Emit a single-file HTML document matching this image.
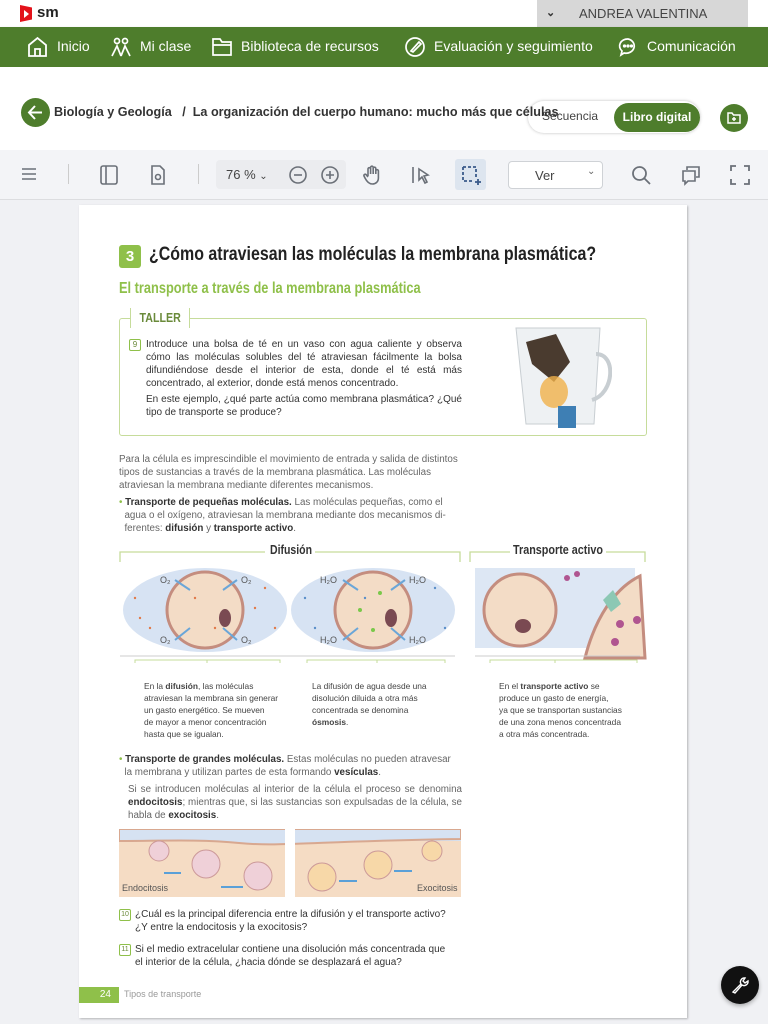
<!DOCTYPE html>
<html><head><meta charset="utf-8"><style>
*{box-sizing:border-box;margin:0;padding:0}
body{width:768px;height:1024px;overflow:hidden;background:#f0f1f4;font-family:"Liberation Sans",sans-serif;position:relative;color:#333}
.a{position:absolute}
.nav span{position:absolute;top:11px;color:#fff;font-size:14px}
.nav svg{position:absolute;top:9px}
.pt{font-size:9.8px;line-height:13px;color:#666;position:absolute}
.pt b{color:#333}
.cap{font-size:8.4px;line-height:12px;color:#444;position:absolute}
.tb svg{position:absolute;top:164px}
</style></head><body>
<!-- top bar -->
<div class="a" style="left:0;top:0;width:768px;height:27px;background:#fff"></div>
<div class="a" style="left:20px;top:5px;width:12px;height:17px;background:#e3131b;clip-path:polygon(0 0,100% 15%,100% 85%,0 100%)"></div>
<div class="a" style="left:24px;top:10px;width:0;height:0;border-left:5px solid #fff;border-top:4px solid transparent;border-bottom:4px solid transparent"></div>
<div class="a" style="left:37px;top:4px;font-size:15px;font-weight:bold;color:#222">sm</div>
<div class="a" style="left:537px;top:0;width:211px;height:27px;background:#d7d7d7"></div>
<div class="a" style="left:546px;top:6px;font-size:11px;color:#333;font-weight:bold">&#8964;</div>
<div class="a" style="left:579px;top:6px;font-size:13px;color:#444">ANDREA VALENTINA</div>
<!-- nav -->
<div class="a nav" style="left:0;top:27px;width:768px;height:40px;background:#4e7d2c;box-shadow:0 2px 4px rgba(0,0,0,.2)">
<svg style="left:27px" width="21" height="22" viewBox="0 0 21 22" fill="none" stroke="#fff" stroke-width="1.8"><path d="M2 9L10.5 2 19 9V20H2Z M8 20V13H13V20"/></svg><span style="left:57px">Inicio</span>
<svg style="left:110px" width="22" height="22" viewBox="0 0 22 22" fill="none" stroke="#fff" stroke-width="1.7"><circle cx="7" cy="5" r="2.5"/><circle cx="15" cy="5" r="2.5"/><path d="M2 20L7 10 11 20M11 20L15 10 20 20"/></svg><span style="left:140px">Mi clase</span>
<svg style="left:211px" width="22" height="22" viewBox="0 0 22 22" fill="none" stroke="#fff" stroke-width="1.7"><path d="M2 3H9L11 6H20V19H2Z M2 9H20"/></svg><span style="left:241px">Biblioteca de recursos</span>
<svg style="left:404px" width="22" height="22" viewBox="0 0 22 22" fill="none" stroke="#fff" stroke-width="1.7"><circle cx="11" cy="11" r="9"/><path d="M7 15L15 6 17 8 9 16Z"/></svg><span style="left:434px">Evaluación y seguimiento</span>
<svg style="left:617px" width="22" height="22" viewBox="0 0 22 22" fill="none" stroke="#fff" stroke-width="1.7"><path d="M11 3A8 7 0 1 1 7 17L4 19 5 15A8 7 0 0 1 11 3Z"/><circle cx="7.5" cy="10" r=".8" fill="#fff"/><circle cx="11" cy="10" r=".8" fill="#fff"/><circle cx="14.5" cy="10" r=".8" fill="#fff"/></svg><span style="left:647px">Comunicación</span>
</div>
<!-- breadcrumb -->
<div class="a" style="left:0;top:67px;width:768px;height:83px;background:#fff"></div>
<div class="a" style="left:21px;top:98px;width:29px;height:29px;border-radius:50%;background:#4e7d2c"></div>
<svg class="a" style="left:26px;top:103px" width="19" height="19" viewBox="0 0 19 19" fill="none" stroke="#fff" stroke-width="2"><path d="M16 9.5H3M9 3L3 9.5 9 16"/></svg>
<div class="a" style="left:528px;top:101px;width:172px;height:32px;border-radius:16px;background:#fff;box-shadow:0 0 3px rgba(0,0,0,.25)"></div>
<div class="a" style="left:542px;top:109px;font-size:12px;color:#444">Secuencia</div>
<div class="a" style="left:54px;top:104px;font-size:13px;font-weight:bold;color:#333;white-space:nowrap;transform:scaleX(.97);transform-origin:left">Biología y Geología&nbsp;&nbsp; /&nbsp; La organización del cuerpo humano: mucho más que células</div>
<div class="a" style="left:614px;top:103px;width:86px;height:29px;border-radius:15px;background:#4e7d2c;color:#fff;font-size:12px;font-weight:bold;text-align:center;line-height:29px">Libro digital</div>
<div class="a" style="left:720px;top:104px;width:28px;height:28px;border-radius:50%;background:#4e7d2c"></div>
<svg class="a" style="left:726px;top:110px" width="16" height="16" viewBox="0 0 16 16" fill="none" stroke="#fff" stroke-width="1.5"><path d="M2 3H6L7.5 5H14V13H2Z M8 7V11M6 9H10"/></svg>
<!-- toolbar -->
<div class="a" style="left:0;top:150px;width:768px;height:50px;background:#f3f4f7;border-bottom:1px solid #dcdde0"></div>
<div class="tb">
<svg class="a" style="left:20px" width="18" height="20" viewBox="0 0 18 20" stroke="#6b7078" stroke-width="1.6"><path d="M2 5H16M2 10H16M2 15H16"/></svg>
<div class="a" style="left:68px;top:164px;width:1px;height:20px;background:#ccc"></div>
<svg class="a" style="left:99px" width="20" height="22" viewBox="0 0 20 22" fill="none" stroke="#6b7078" stroke-width="1.6"><rect x="2" y="2" width="16" height="18" rx="2"/><path d="M7 2V20"/></svg>
<svg class="a" style="left:149px" width="18" height="22" viewBox="0 0 18 22" fill="none" stroke="#6b7078" stroke-width="1.6"><path d="M3 2H11L15 6V20H3Z"/><circle cx="9" cy="13" r="2.5"/></svg>
<div class="a" style="left:198px;top:164px;width:1px;height:20px;background:#ccc"></div>
<div class="a" style="left:216px;top:160px;width:130px;height:29px;background:#ebecef;border-radius:4px"></div>
<div class="a" style="left:226px;top:167px;font-size:13px;color:#444">76 % <span style="font-size:10px">&#8964;</span></div>
<svg class="a" style="left:287px" width="22" height="22" viewBox="0 0 22 22" fill="none" stroke="#6b7078" stroke-width="1.6"><circle cx="11" cy="11" r="8"/><path d="M7 11H15"/></svg>
<svg class="a" style="left:319px" width="22" height="22" viewBox="0 0 22 22" fill="none" stroke="#6b7078" stroke-width="1.6"><circle cx="11" cy="11" r="8"/><path d="M7 11H15M11 7V15"/></svg>
<svg class="a" style="left:361px" width="22" height="22" viewBox="0 0 22 22" fill="none" stroke="#6b7078" stroke-width="1.6"><path d="M7 12V5a1.3 1.3 0 0 1 2.6 0V10V3.5a1.3 1.3 0 0 1 2.6 0V10V4.5a1.3 1.3 0 0 1 2.6 0V10V7a1.3 1.3 0 0 1 2.6 0V14c0 4-3 6-6 6S6 18 4 14L3 12a1.3 1.3 0 0 1 2.2-1.3L7 13"/></svg>
<svg class="a" style="left:410px" width="22" height="22" viewBox="0 0 22 22" fill="none" stroke="#6b7078" stroke-width="1.6"><path d="M3 3V19M9 5L18 11 14 12 17 18 15 19 12 13 9 16Z"/></svg>
<div class="a" style="left:455px;top:159px;width:31px;height:31px;background:#dde5ef;border-radius:3px"></div>
<svg class="a" style="left:460px" width="22" height="22" viewBox="0 0 22 22" fill="none" stroke="#3a5a8a" stroke-width="1.8" stroke-dasharray="3 2"><path d="M3 3H16V14M3 3V17H14"/><path d="M18 15V21M15 18H21" stroke-dasharray="none"/></svg>
<div class="a" style="left:508px;top:161px;width:95px;height:28px;background:#fff;border:1px solid #cfd2d6;border-radius:4px"></div>
<div class="a" style="left:535px;top:168px;font-size:13px;color:#444">Ver</div>
<div class="a" style="left:587px;top:166px;font-size:10px;color:#666">&#8964;</div>
<svg class="a" style="left:630px" width="22" height="22" viewBox="0 0 22 22" fill="none" stroke="#6b7078" stroke-width="1.8"><circle cx="9.5" cy="9.5" r="6.5"/><path d="M14 14L20 20"/></svg>
<svg class="a" style="left:680px" width="22" height="22" viewBox="0 0 22 22" fill="none" stroke="#6b7078" stroke-width="1.6"><path d="M7 6V3H19V13H16M3 7H15V17H8L5 20V17H3Z"/></svg>
<svg class="a" style="left:729px" width="22" height="22" viewBox="0 0 22 22" fill="none" stroke="#6b7078" stroke-width="1.8"><path d="M2 7V2H7M15 2H20V7M20 15V20H15M7 20H2V15"/></svg>
</div>
<!-- page -->
<div class="a" style="left:79px;top:205px;width:608px;height:813px;background:#fff;box-shadow:1px 1px 2px rgba(0,0,0,.25)"></div>
<div class="a" style="left:119px;top:245px;width:22px;height:23px;background:#8fc04a;border-radius:3px;color:#fff;font-weight:bold;font-size:15px;text-align:center;line-height:23px">3</div>
<div class="a" style="left:149px;top:244px;font-size:19px;font-weight:bold;color:#222;white-space:nowrap;transform:scaleX(.84);transform-origin:left">¿Cómo atraviesan las moléculas la membrana plasmática?</div>
<div class="a" style="left:119px;top:280px;font-size:16px;font-weight:bold;color:#8fc04a;white-space:nowrap;transform:scaleX(.8);transform-origin:left">El transporte a través de la membrana plasmática</div>
<div class="a" style="left:119px;top:318px;width:528px;height:118px;border:1.5px solid #c6dc9b;border-radius:3px"></div>
<div class="a" style="left:130px;top:308px;width:60px;height:20px;background:#fff;border-left:1.5px solid #c6dc9b;border-right:1.5px solid #c6dc9b;font-size:13px;font-weight:bold;color:#6a8a3a;text-align:center;line-height:20px"><span style="display:inline-block;transform:scaleX(.82)">TALLER</span></div>
<div class="a" style="left:129px;top:339px;width:12px;height:12px;border:1.2px solid #8fc04a;border-radius:2px;font-size:8px;text-align:center;line-height:10px;color:#6a8a3a">9</div>
<div class="pt" style="left:146px;top:338px;width:316px;color:#333;font-size:10px;line-height:13px;text-align:justify">Introduce una bolsa de té en un vaso con agua caliente y observa cómo las moléculas solubles del té atraviesan fácilmente la bolsa difundiéndose desde el interior de esta, donde el té está más concentrado, al exterior, donde está menos concentrado.<div style="margin-top:3px">En este ejemplo, ¿qué parte actúa como membrana plasmática? ¿Qué tipo de transporte se produce?</div></div>
<svg class="a" style="left:512px;top:324px" width="100" height="108" viewBox="0 0 100 108">
<path d="M4 4H88L82 100H14Z" fill="#eef1f3" stroke="#c8ced2"/>
<path d="M84 30C105 30 102 70 80 76" fill="none" stroke="#c8ced2" stroke-width="4"/>
<path d="M14 18L44 10 58 38 42 58 20 40Z" fill="#4a3b2f"/>
<ellipse cx="42" cy="68" rx="14" ry="16" fill="#f0b24a" opacity=".8"/>
<rect x="46" y="82" width="18" height="22" fill="#3e7fb4"/>
</svg>
<div class="pt" style="left:119px;top:453px;width:343px">Para la célula es imprescindible el movimiento de entrada y salida de distintos tipos de sustancias a través de la membrana plasmática. Las moléculas atraviesan la membrana mediante diferentes mecanismos.</div>
<div class="pt" style="left:119px;top:496px;width:345px;white-space:nowrap"><span style="color:#8fc04a">•</span> <b>Transporte de pequeñas moléculas.</b> Las moléculas pequeñas, como el<br>&nbsp;&nbsp;agua o el oxígeno, atraviesan la membrana mediante dos mecanismos di-<br>&nbsp;&nbsp;ferentes: <b>difusión</b> y <b>transporte activo</b>.</div>
<!-- diagram -->
<svg class="a" style="left:115px;top:538px" width="540" height="125" viewBox="0 0 540 125">
<path d="M5 24V14H345V24M355 24V14H530V24" fill="none" stroke="#c6dc9b" stroke-width="1.3"/>
<rect x="150" y="4" width="50" height="16" fill="#fff"/><rect x="395" y="4" width="96" height="16" fill="#fff"/>
<text x="155" y="16" font-family="Liberation Sans,sans-serif" font-weight="bold" font-size="12.5" fill="#333" textLength="42" lengthAdjust="spacingAndGlyphs">Difusión</text>
<text x="398" y="16" font-family="Liberation Sans,sans-serif" font-weight="bold" font-size="12.5" fill="#333" textLength="90" lengthAdjust="spacingAndGlyphs">Transporte activo</text>
<ellipse cx="90" cy="72" rx="82" ry="42" fill="#d7e3f3"/>
<ellipse cx="258" cy="72" rx="82" ry="42" fill="#d7e3f3"/>
<path d="M360 30H520V110H360Z" fill="#dde7f4"/>
<circle cx="90" cy="72" r="38" fill="#f3dcc6" stroke="#c48d7f" stroke-width="3"/>
<circle cx="258" cy="72" r="38" fill="#f3dcc6" stroke="#c48d7f" stroke-width="3"/>
<circle cx="405" cy="72" r="36" fill="#f3dcc6" stroke="#c48d7f" stroke-width="3"/>
<path d="M470 120C480 80 500 50 525 38L530 120Z" fill="#f3dcc6" stroke="#c48d7f" stroke-width="3"/>
<ellipse cx="110" cy="80" rx="6" ry="9" fill="#7a4a52"/><ellipse cx="276" cy="80" rx="6" ry="9" fill="#7a4a52"/><ellipse cx="408" cy="88" rx="8" ry="7" fill="#7a4a52"/>
<path d="M488 62L498 52 506 66 496 74Z" fill="#8cc8b4"/>
<g fill="#b05590"><circle cx="452" cy="40" r="3"/><circle cx="462" cy="36" r="3"/><circle cx="505" cy="86" r="4"/><circle cx="522" cy="82" r="4"/><circle cx="500" cy="104" r="4"/></g>
<g fill="#e07a4a"><circle cx="20" cy="60" r="1.2"/><circle cx="35" cy="90" r="1.2"/><circle cx="150" cy="50" r="1.2"/><circle cx="160" cy="90" r="1.2"/><circle cx="80" cy="60" r="1.2"/><circle cx="100" cy="90" r="1.2"/><circle cx="25" cy="80" r="1.2"/><circle cx="140" cy="70" r="1.2"/></g>
<g fill="#5a8fc8"><circle cx="190" cy="60" r="1.2"/><circle cx="200" cy="90" r="1.2"/><circle cx="320" cy="50" r="1.2"/><circle cx="330" cy="90" r="1.2"/><circle cx="250" cy="60" r="1.2"/></g>
<g fill="#7ac84a"><circle cx="245" cy="72" r="2"/><circle cx="265" cy="55" r="2"/><circle cx="258" cy="92" r="2"/></g>
<g stroke="#6aa6d8" stroke-width="2"><path d="M60 42L75 52M122 42L108 52M60 102L75 90M122 102L108 90M228 42L243 52M290 42L276 52M228 102L243 90M290 102L276 90"/></g>
<g font-family="Liberation Sans,sans-serif" font-size="9" fill="#555"><text x="45" y="45">O₂</text><text x="126" y="45">O₂</text><text x="45" y="105">O₂</text><text x="126" y="105">O₂</text><text x="205" y="45">H₂O</text><text x="294" y="45">H₂O</text><text x="205" y="105">H₂O</text><text x="294" y="105">H₂O</text></g>
<path d="M5 118H340M360 118H525" stroke="#ccc"/>
<path d="M20 133V122H92V133M92 122H165V133M192 133V122H262V133M262 122H330V133M375 133V122H440V133M440 122H522V133" fill="none" stroke="#c6dc9b"/>
</svg>
<div class="cap" style="left:144px;top:680px;width:140px">En la <b>difusión</b>, las moléculas<br>atraviesan la membrana sin generar<br>un gasto energético. Se mueven<br>de mayor a menor concentración<br>hasta que se igualan.</div>
<div class="cap" style="left:312px;top:680px;width:140px">La difusión de agua desde una<br>disolución diluida a otra más<br>concentrada se denomina<br><b>ósmosis</b>.</div>
<div class="cap" style="left:499px;top:680px;width:140px">En el <b>transporte activo</b> se<br>produce un gasto de energía,<br>ya que se transportan sustancias<br>de una zona menos concentrada<br>a otra más concentrada.</div>
<div class="pt" style="left:119px;top:753px;width:345px;white-space:nowrap"><span style="color:#8fc04a">•</span> <b>Transporte de grandes moléculas.</b> Estas moléculas no pueden atravesar<br>&nbsp;&nbsp;la membrana y utilizan partes de esta formando <b>vesículas</b>.</div>
<div class="pt" style="left:128px;top:783px;width:334px;text-align:justify">Si se introducen moléculas al interior de la célula el proceso se denomina <b>endocitosis</b>; mientras que, si las sustancias son expulsadas de la célula, se habla de <b>exocitosis</b>.</div>
<svg class="a" style="left:119px;top:829px" width="342" height="68" viewBox="0 0 342 68">
<rect width="342" height="68" fill="#f5dcc4"/><path d="M0 0H342V12H0Z" fill="#d6e2f2"/>
<path d="M0 12C40 12 80 10 120 14S200 12 342 10V0H0Z" fill="#d6e2f2" stroke="#d8a890" stroke-width="2"/>
<rect x="166" y="0" width="10" height="68" fill="#fff"/>
<circle cx="40" cy="22" r="10" fill="#efd0d8" stroke="#c99"/><circle cx="87" cy="35" r="14" fill="#efd0d8" stroke="#c99"/><circle cx="139" cy="47" r="14" fill="#efd0d8" stroke="#c99"/>
<circle cx="203" cy="48" r="14" fill="#f7d8a8" stroke="#c99"/><circle cx="259" cy="36" r="14" fill="#f7d8a8" stroke="#c99"/><circle cx="313" cy="22" r="10" fill="#f7d8a8" stroke="#c99"/>
<g stroke="#5aa0d8" stroke-width="2"><path d="M45 44H62M102 58H124M220 52H238M275 42H293"/></g>
<text x="3" y="62" font-family="Liberation Sans,sans-serif" font-size="9" fill="#555">Endocitosis</text>
<text x="298" y="62" font-family="Liberation Sans,sans-serif" font-size="9" fill="#555">Exocitosis</text>
</svg>
<div class="a" style="left:119px;top:909px;width:12px;height:12px;border:1.2px solid #8fc04a;border-radius:2px;font-size:7px;text-align:center;line-height:10px;color:#6a8a3a">10</div>
<div class="pt" style="left:135px;top:908px;width:330px;color:#333;font-size:10px">¿Cuál es la principal diferencia entre la difusión y el transporte activo?<br>¿Y entre la endocitosis y la exocitosis?</div>
<div class="a" style="left:119px;top:944px;width:12px;height:12px;border:1.2px solid #8fc04a;border-radius:2px;font-size:7px;text-align:center;line-height:10px;color:#6a8a3a">11</div>
<div class="pt" style="left:135px;top:943px;width:330px;color:#333;font-size:10px">Si el medio extracelular contiene una disolución más concentrada que<br>el interior de la célula, ¿hacia dónde se desplazará el agua?</div>
<div class="a" style="left:79px;top:987px;width:40px;height:16px;background:#8fc04a;color:#fff;font-size:10px;line-height:16px;text-align:right;padding-right:8px">24</div>
<div class="a" style="left:124px;top:989px;font-size:9px;color:#999">Tipos de transporte</div>
<!-- fab -->
<div class="a" style="left:721px;top:966px;width:38px;height:38px;border-radius:50%;background:#111;box-shadow:0 2px 4px rgba(0,0,0,.3)"></div>
<svg class="a" style="left:730px;top:975px" width="20" height="20" viewBox="0 0 20 20" fill="none" stroke="#fff" stroke-width="1.4"><path d="M3 17L11 9A4 4 0 0 1 15 3L13 6 15 8 18 6A4 4 0 0 1 12 10L5 18Z"/></svg>
</body></html>
